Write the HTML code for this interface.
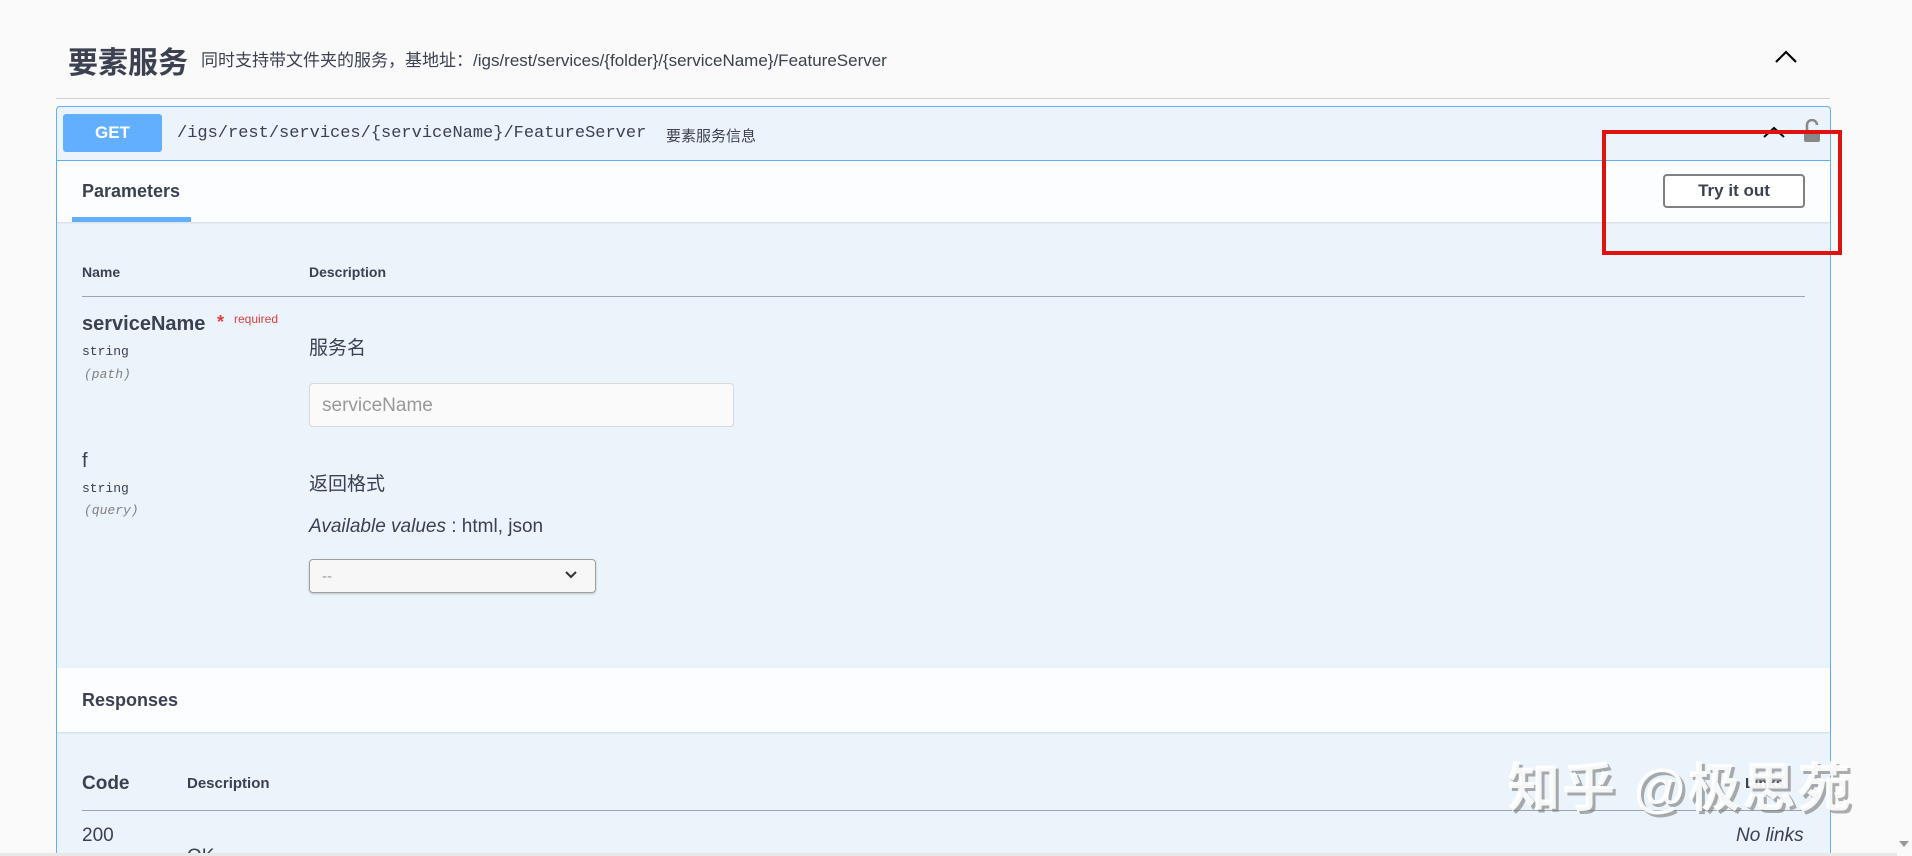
<!DOCTYPE html>
<html style="overflow:hidden;width:1912px;height:856px"><head><meta charset="utf-8"><style>
*{margin:0;padding:0;box-sizing:border-box}
body{width:1912px;height:856px;background:#fafafa;position:relative;overflow:hidden;font-family:"Liberation Sans","Noto Sans CJK SC",sans-serif;color:#3b4151}
.a{position:absolute;white-space:nowrap}
.mono{font-family:"Liberation Mono","Noto Sans CJK SC",monospace}
</style></head><body>
<div class="a" style="left:68px;top:38px;font-size:30px;font-weight:bold;color:#3b4151">要素服务</div>
<div class="a" style="left:201px;top:46px;font-size:17px;color:#3b4151">同时支持带文件夹的服务，基地址：/igs/rest/services/{folder}/{serviceName}/FeatureServer</div>
<svg class="a" style="left:1774px;top:48px" width="24" height="16" viewBox="0 0 24 16"><path d="M2 14 L12 4 L22 14" fill="none" stroke="#000" stroke-width="2.2"/></svg>
<div class="a" style="left:56px;top:98px;width:1774px;height:1px;background:#d0d0d0"></div>
<!-- card -->
<div class="a" style="left:56px;top:106px;width:1775px;height:760px;border:1px solid #61affe;border-radius:4px;background:#ebf3fb"></div>
<div class="a" style="left:57px;top:160px;width:1773px;height:1px;background:#61affe"></div>
<div class="a" style="left:63px;top:114px;width:99px;height:38px;background:#61affe;border-radius:3px;color:#fff;font-weight:bold;font-size:17px;text-align:center;line-height:38px">GET</div>
<div class="a mono" style="left:177px;top:124px;font-size:17px;color:#3b4151">/igs/rest/services/{serviceName}/FeatureServer</div>
<div class="a" style="left:666px;top:125px;font-size:15px;color:#3b4151">要素服务信息</div>
<svg class="a" style="left:1762px;top:125px" width="24" height="14" viewBox="0 0 24 14"><path d="M2 12 L12 3 L22 12" fill="none" stroke="#000" stroke-width="2"/></svg>
<svg class="a" style="left:1802px;top:119px" width="20" height="24" viewBox="0 0 20 24"><path d="M5 11 V6 a5 5 0 0 1 10 0" fill="none" stroke="#888" stroke-width="2.5"/><rect x="2" y="11" width="16" height="12" rx="2" fill="#888"/></svg>
<!-- params header -->
<div class="a" style="left:57px;top:161px;width:1773px;height:61px;background:#fcfdff;box-shadow:0 1px 2px rgba(0,0,0,.1)"></div>
<div class="a" style="left:82px;top:181px;font-size:18px;font-weight:bold">Parameters</div>
<div class="a" style="left:72px;top:217px;width:119px;height:5px;background:#61affe"></div>
<div class="a" style="left:1663px;top:174px;width:142px;height:34px;border:2px solid #808080;border-radius:4px;background:#fff;text-align:center;line-height:30px;font-weight:bold;font-size:17px">Try it out</div>
<div class="a" style="left:1602px;top:130px;width:240px;height:125px;border:4px solid #e0120f"></div>
<!-- table -->
<div class="a" style="left:82px;top:264px;font-size:14px;font-weight:bold">Name</div>
<div class="a" style="left:309px;top:264px;font-size:14px;font-weight:bold">Description</div>
<div class="a" style="left:82px;top:296px;width:1723px;height:1px;background:#9ea4ad"></div>
<div class="a" style="left:82px;top:313px;font-size:20px;font-weight:bold">serviceName</div>
<div class="a" style="left:217px;top:312px;font-size:18px;color:#e04040;font-weight:bold">*</div>
<div class="a" style="left:234px;top:312px;font-size:12px;color:#e04040">required</div>
<div class="a mono" style="left:82px;top:344px;font-size:13px">string</div>
<div class="a mono" style="left:84px;top:367px;font-size:13px;font-style:italic;color:#808080">(path)</div>
<div class="a" style="left:309px;top:333px;font-size:19px">服务名</div>
<div class="a" style="left:309px;top:383px;width:425px;height:44px;border:1px solid #d9d9d9;border-radius:4px;background:#fafafa;font-size:19px;color:#999;padding:11px 12px">serviceName</div>
<div class="a" style="left:82px;top:450px;font-size:20px">f</div>
<div class="a mono" style="left:82px;top:481px;font-size:13px">string</div>
<div class="a mono" style="left:84px;top:503px;font-size:13px;font-style:italic;color:#808080">(query)</div>
<div class="a" style="left:309px;top:469px;font-size:19px">返回格式</div>
<div class="a" style="left:309px;top:516px;font-size:19px"><i>Available values</i> : html, json</div>
<div class="a" style="left:309px;top:559px;width:287px;height:34px;border:1px solid #a0a0a0;border-radius:4px;background:#f7f7f7;box-shadow:0 1px 2px rgba(0,0,0,.2);font-size:15px;color:#999;padding:8px 12px">--</div>
<svg class="a" style="left:564px;top:570px" width="14" height="10" viewBox="0 0 14 10"><path d="M2 2 L7 7 L12 2" fill="none" stroke="#333" stroke-width="2"/></svg>
<!-- responses -->
<div class="a" style="left:57px;top:668px;width:1773px;height:64px;background:#fcfdff;box-shadow:0 1px 2px rgba(0,0,0,.1)"></div>
<div class="a" style="left:82px;top:690px;font-size:18px;font-weight:bold">Responses</div>
<div class="a" style="left:82px;top:773px;font-size:19px;font-weight:bold">Code</div>
<div class="a" style="left:187px;top:775px;font-size:15px;font-weight:bold">Description</div>
<div class="a" style="left:1745px;top:775px;font-size:15px;font-weight:bold">Links</div>
<div class="a" style="left:82px;top:810px;width:1723px;height:1px;background:#9ea4ad"></div>
<div class="a" style="left:82px;top:825px;font-size:19px">200</div>
<div class="a" style="left:187px;top:846px;font-size:19px;height:10px;overflow:hidden">OK</div>
<div class="a" style="left:1736px;top:825px;font-size:19px;font-style:italic">No links</div>
<!-- scrollbar -->
<div class="a" style="left:1897px;top:0;width:15px;height:856px;background:#fafafa"></div>
<svg class="a" style="left:1899px;top:840px" width="10" height="8"><path d="M0 1 L10 1 L5 7Z" fill="#999"/></svg>
<div class="a" style="left:0;top:853px;width:1897px;height:3px;background:#e8e8e8"></div>
<!-- watermark -->
<div class="a" style="left:1507px;top:746px;font-size:53px;font-weight:bold;color:rgba(255,255,255,.9);text-shadow:3px 3px 0 rgba(120,120,120,.6);letter-spacing:2px">知乎 @极思苑</div>
</body></html>
